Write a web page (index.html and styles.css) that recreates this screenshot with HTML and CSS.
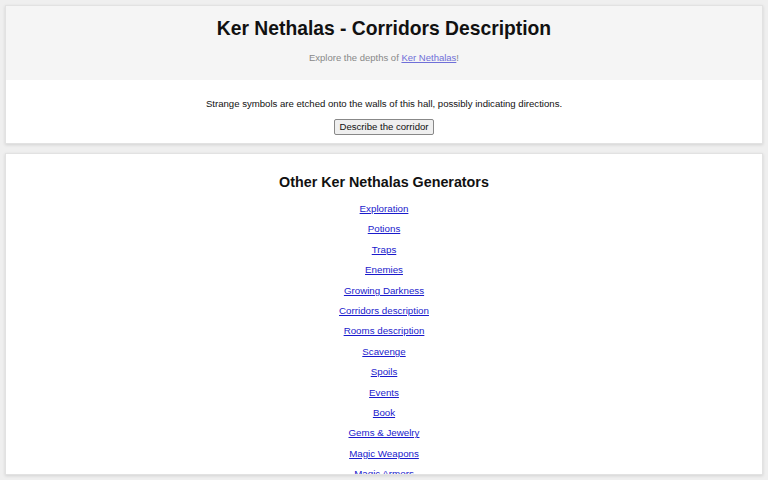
FILE: index.html
```html
<!DOCTYPE html>
<html>
<head>
<meta charset="utf-8">
<link rel="stylesheet" href="styles.css">
</head>
<body>
<div class="page">
  <div class="card top">
    <header class="head">
      <h1 class="title">Ker Nethalas - Corridors Description</h1>
      <p class="sub">Explore the depths of <a class="sublink" href="#">Ker Nethalas</a>!</p>
    </header>
    <section class="result">
      <p class="desc">Strange symbols are etched onto the walls of this hall, possibly indicating directions.</p>
      <button class="btn">Describe the corridor</button>
    </section>
  </div>
  <div class="card others">
    <h2 class="h2">Other Ker Nethalas Generators</h2>
    <ul class="links">
      <li><a href="#">Exploration</a></li>
      <li><a href="#">Potions</a></li>
      <li><a href="#">Traps</a></li>
      <li><a href="#">Enemies</a></li>
      <li><a href="#">Growing Darkness</a></li>
      <li><a href="#">Corridors description</a></li>
      <li><a href="#">Rooms description</a></li>
      <li><a href="#">Scavenge</a></li>
      <li><a href="#">Spoils</a></li>
      <li><a href="#">Events</a></li>
      <li><a href="#">Book</a></li>
      <li><a href="#">Gems &amp; Jewelry</a></li>
      <li><a href="#">Magic Weapons</a></li>
      <li><a href="#">Magic Armors</a></li>
      <li><a href="#">Magic Items</a></li>
    </ul>
  </div>
</div>
</body>
</html>
```
FILE: styles.css
```css
html, body {
  margin: 0;
  padding: 0;
  height: 100%;
  overflow: hidden;
}
body {
  background: #efefef;
  font-family: "Liberation Sans", Arial, sans-serif;
  color: #111;
}
.page {
  padding: 5px 5px 0 5px;
  display: flex;
  flex-direction: column;
  gap: 9px;
  height: 475px;
  box-sizing: border-box;
}
.card {
  background: #fff;
  border: 1px solid #e2e2e2;
  box-shadow: 0 1px 3px rgba(0,0,0,0.12);
}
.head {
  background: #f5f5f5;
  text-align: center;
  padding: 14px 0 15px;
}
.title {
  margin: 0;
  font-size: 19.3px;
  font-weight: bold;
  line-height: 18px;
}
.sub {
  margin: 13px 0 0;
  font-size: 9.5px;
  color: #888;
  line-height: 14px;
}
.sublink {
  color: #6f6fd8;
}
.result {
  text-align: center;
  padding: 17px 0 8px;
}
.desc {
  margin: 0 0 5px;
  font-size: 9.6px;
  line-height: 14px;
  color: #111;
}
.btn {
  font-family: "Liberation Sans", Arial, sans-serif;
  font-size: 9.6px;
  padding: 1px 4px;
  background: #efefef;
  border: 1px solid #888;
  border-radius: 2px;
  color: #111;
  line-height: 12px;
}
.others {
  flex: 1;
  overflow: hidden;
  text-align: center;
  padding-top: 20px;
}
.h2 {
  margin: 0 0 12px;
  font-size: 14.3px;
  line-height: 17px;
  font-weight: bold;
}
.links {
  list-style: none;
  margin: 0;
  padding: 0;
  display: flex;
  flex-direction: column;
  gap: 8.4px;
}
.links li {
  font-size: 9.75px;
  line-height: 12px;
}
.links a {
  color: #1a1acc;
}
```
